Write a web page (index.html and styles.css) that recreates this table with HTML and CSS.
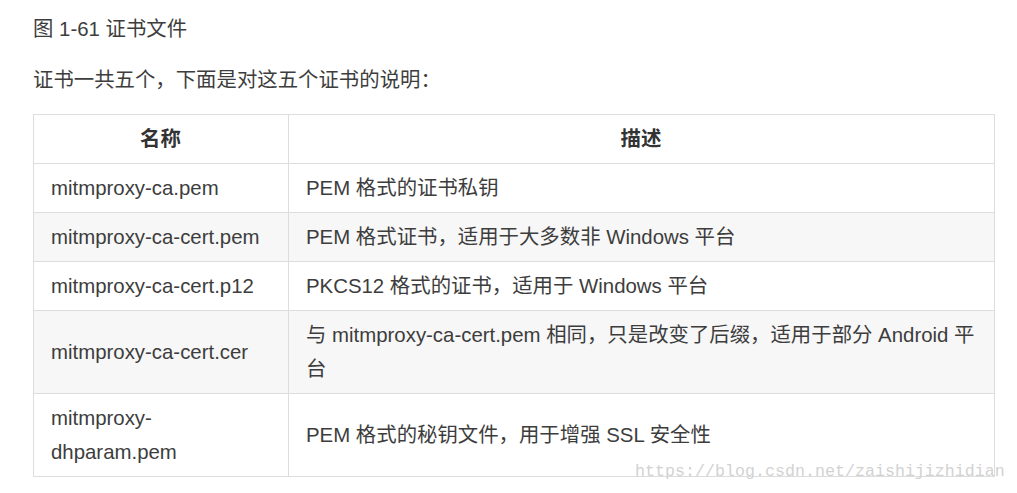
FILE: index.html
```html
<!DOCTYPE html>
<html lang="zh-CN">
<head>
<meta charset="utf-8">
<title>证书文件</title>
<link rel="stylesheet" href="styles.css">
</head>
<body>
<div class="page">
  <p class="para">图 1-61 证书文件</p>
  <p class="para">证书一共五个，下面是对这五个证书的说明：</p>
  <table class="cert-table">
    <colgroup>
      <col class="col-name">
      <col class="col-desc">
    </colgroup>
    <thead>
      <tr><th>名称</th><th>描述</th></tr>
    </thead>
    <tbody>
      <tr><td>mitmproxy-ca.pem</td><td class="desc">PEM 格式的证书私钥</td></tr>
      <tr><td>mitmproxy-ca-cert.pem</td><td class="desc">PEM 格式证书，适用于大多数非 Windows 平台</td></tr>
      <tr><td>mitmproxy-ca-cert.p12</td><td class="desc">PKCS12 格式的证书，适用于 Windows 平台</td></tr>
      <tr><td>mitmproxy-ca-cert.cer</td><td class="desc">与 mitmproxy-ca-cert.pem 相同，只是改变了后缀，适用于部分 Android 平台</td></tr>
      <tr><td>mitmproxy-dhparam.pem</td><td class="desc">PEM 格式的秘钥文件，用于增强 SSL 安全性</td></tr>
    </tbody>
  </table>
  <div class="watermark">https://blog.csdn.net/zaishijizhidian</div>
</div>
</body>
</html>
```
FILE: styles.css
```css
html, body {
  margin: 0;
  padding: 0;
  background: #ffffff;
}
body {
  font-family: "Liberation Sans", "Noto Sans CJK SC", sans-serif;
  font-size: 20.4px;
  line-height: 34px;
  color: #3d3d3d;
}
.page {
  position: relative;
  padding: 12px 0 0 33px;
  height: 481px;
  overflow: hidden;
}
.para {
  margin: 0 0 17px 0;
}
.cert-table {
  border-collapse: collapse;
  table-layout: fixed;
  width: 962px;
}
.col-name { width: 255px; }
.cert-table th,
.cert-table td {
  border: 1px solid #dddddd;
  padding: 7px 18px 7px 17px;
  text-align: left;
  vertical-align: middle;
  word-wrap: break-word;
}
.cert-table th {
  font-weight: bold;
  text-align: center;
  color: #333333;
}
.cert-table td.desc {
  padding-right: 8px;
}
.cert-table tbody tr:nth-child(even) td {
  background: #f7f7f7;
}
.watermark {
  position: absolute;
  left: 635px;
  top: 460px;
  font-family: "Liberation Mono", "DejaVu Sans Mono", monospace;
  font-size: 16.67px;
  line-height: 24px;
  color: #d2d2d2;
  white-space: nowrap;
}
```
